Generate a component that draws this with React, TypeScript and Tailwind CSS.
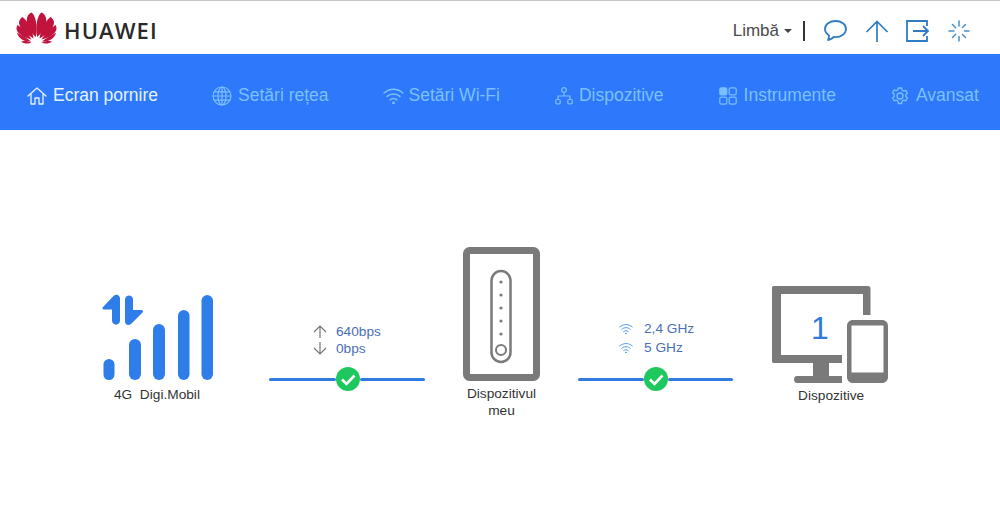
import React from "react";

const font = "font-['Liberation_Sans',Arial,sans-serif]";

const Petals = () => (
  <>
    <path d="M19.8 25C14 20 9.500 13 11 6C11.500 3.500 13.500 1 15.500 .5C19.500 3 22 14 19.800 25Z" />
    <path d="M17.500 26.500C10 22 3 16 3 10.500C3 8.500 4.500 6 6.500 5C11 8 16.500 18 17.500 26.500Z" />
    <path d="M15.500 27.500C9 26 1.500 22.500 .5 17C.5 15.500 .8 14 1.500 13C6 16 12 21 15.500 27.500Z" />
    <path d="M15 29.500C9.500 30 3 27.500 .8 20.500C5.500 23.500 11 26 15 29.500Z" />
    <path d="M15.500 30.500C12.500 32 8 32 5 29.500C8 28.500 12 29 15.500 30.500Z" />
  </>
);

const HuaweiLogo = () => (
  <svg width="41" height="32" viewBox="0 0 41 32" fill="#c0143c">
    <Petals />
    <g transform="matrix(-1 0 0 1 41 0)">
      <Petals />
    </g>
  </svg>
);

const HomeIcon = () => (
  <svg width="20" height="20" viewBox="0 0 20 20" fill="none" stroke="currentColor" strokeWidth="1.3">
    <path d="M1 10 10 2l9 8M4 8v10h4v-6h4v6h4V8" strokeLinejoin="round" strokeLinecap="round" />
  </svg>
);

const GlobeIcon = () => (
  <svg width="20" height="20" viewBox="0 0 20 20" fill="none" stroke="currentColor" strokeWidth="1.2">
    <circle cx="10" cy="10" r="9" />
    <ellipse cx="10" cy="10" rx="4" ry="9" />
    <path d="M10 1v18M1 10h18M2.200 5.800h15.600M2.200 14.200h15.600" />
  </svg>
);

const WifiIcon = ({ size = 21 }: { size?: number }) => (
  <svg width={size} height={size * 0.85} viewBox="0 0 21 18" fill="none" stroke="currentColor" strokeWidth="1.5" strokeLinecap="round">
    <path d="M1 6c5.500-5 13.500-5 19 0M4 9.500c3.800-3.400 9.200-3.400 13 0M7 13c2-1.700 5-1.700 7 0" />
    <circle cx="10.500" cy="16" r="1.400" fill="currentColor" stroke="none" />
  </svg>
);

const TreeIcon = () => (
  <svg width="18" height="18" viewBox="0 0 18 18" fill="none" stroke="currentColor" strokeWidth="1.2">
    <circle cx="9" cy="3" r="2.300" />
    <rect x=".8" y="12.500" width="4.400" height="4.400" rx="1.200" />
    <rect x="12.800" y="12.500" width="4.400" height="4.400" rx="1.200" />
    <path d="M9 5.500V9M3 12.500V9h12v3.500" />
  </svg>
);

const AppsIcon = () => (
  <svg width="18" height="18" viewBox="0 0 18 18" fill="none" stroke="currentColor" strokeWidth="1.2">
    <rect x=".8" y=".8" width="7" height="7" rx="1.600" fill="currentColor" />
    <rect x="10.200" y=".8" width="7" height="7" rx="1.600" />
    <rect x=".8" y="10.200" width="7" height="7" rx="1.600" />
    <rect x="10.200" y="10.200" width="7" height="7" rx="1.600" />
  </svg>
);

const GearIcon = () => (
  <svg width="18" height="18" viewBox="0 0 18 18" fill="none" stroke="currentColor" strokeWidth="1.3" strokeLinejoin="round">
    <path d="M7.400 1h3.200l.5 2.200 1.600.9 2.100-.7 1.600 2.800-1.600 1.500v1.800l1.600 1.500-1.600 2.800-2.100-.7-1.600.9-.5 2.500H7.400l-.5-2.500-1.600-.9-2.100.7-1.600-2.800 1.600-1.500V7.200L1.600 5.700l1.600-2.800 2.100.7 1.600-.9z" />
    <circle cx="9" cy="9" r="3" />
  </svg>
);

const navItems = [
  { name: "Ecran pornire", icon: <HomeIcon />, cls: "gap-[6px] text-[#e6f4ff]" },
  { name: "Setări rețea", icon: <GlobeIcon />, cls: "ml-[54px] gap-[6px] text-[#7cc0fb]" },
  { name: "Setări Wi-Fi", icon: <WifiIcon />, cls: "ml-[54px] gap-[5px] text-[#7cc0fb]" },
  { name: "Dispozitive", icon: <TreeIcon />, cls: "ml-[55px] gap-[6px] text-[#7cc0fb]" },
  { name: "Instrumente", icon: <AppsIcon />, cls: "ml-[55px] gap-[7px] text-[#7cc0fb]" },
  { name: "Avansat", icon: <GearIcon />, cls: "ml-[55px] gap-[7px] text-[#7cc0fb]" },
];

const Header = () => (
  <header className="flex h-[54px] items-center justify-between border-t border-[#c6c6c6] bg-white pl-4 pr-[30px]">
    <div className="flex items-center gap-[7px]">
      <HuaweiLogo />
      <span className="pt-[6px] font-['Open_Sans',sans-serif] text-[22px] font-semibold tracking-[1.1px] text-[#2a2a2a]">HUAWEI</span>
    </div>
    <div className="flex items-center pt-[6px] text-[#2f7cc4]">
      <span className="text-[17px] text-[#4a4a4a]">Limbă</span>
      <span className="ml-[5px] h-0 w-0 border-x-4 border-t-[4px] border-x-transparent border-t-[#444]" />
      <span className="ml-[11px] h-[20px] w-[2px] bg-[#333]" />
      <svg className="ml-[19px]" width="23" height="21" viewBox="0 0 23 21" fill="none" stroke="currentColor" strokeWidth="1.8">
        <path d="M11.500 1C5.700 1 1 4.500 1 9c0 2.600 1.500 4.800 4 6.200 0 1.800-.3 3.300-1 4.800 2.500-.6 4.400-1.700 5.800-3 .6.100 1.100.100 1.700.100 5.800 0 10.500-3.600 10.500-8.100S17.300 1 11.500 1Z" strokeLinejoin="round" />
      </svg>
      <svg className="ml-[18px]" width="24" height="22" viewBox="0 0 24 22" fill="none" stroke="currentColor" strokeWidth="1.7">
        <path d="M12 22V1.500M1.500 12 12 1.500 22.500 12" />
      </svg>
      <svg className="ml-[17px]" width="24" height="22" viewBox="0 0 24 22" fill="none" stroke="currentColor" strokeWidth="1.8">
        <path d="M21 6V1H1v20h20v-5M7 11h15M17 6l5 5-5 5" />
      </svg>
      <svg className="ml-[18px]" width="22" height="22" viewBox="0 0 22 22" fill="none" stroke="#4a90c8" strokeWidth="1.500" strokeLinecap="round">
        <path d="M11 1v5M11 16.500v4.500M1 11h5M16.500 11H21M4.500 4.500l3.200 3.200M14.500 14.500l3 3M4.500 17.500l3.200-3.200M14.500 7.500l3-3" />
      </svg>
    </div>
  </header>
);

const Nav = () => (
  <nav className="flex h-[76px] items-center bg-[#2d78fb] pl-[27px] pt-[7px] text-[17.5px]">
    {navItems.map(({ name, icon, cls }) => (
      <div key={name} className={`flex items-center whitespace-nowrap ${cls}`}>
        {icon}
        <span>{name}</span>
      </div>
    ))}
  </nav>
);

const SignalIcon = () => (
  <svg width="114" height="87" viewBox="101 294 114 87" fill="#2f7de8">
    <path d="M103 307 113.500 296C116 293.500 120 295 120 298.500V320.500C120 326 112 326 112 320.500V309.500H104C102.500 309.500 102 308 103 307Z" />
    <path d="M125 299.500C125 294 133 294 133 299.500V310H141.500C143 310 143.500 311.500 142.500 312.500L131 324C128.500 326 125 325 125 321.500Z" />
    <rect x="103.500" y="359" width="11" height="21" rx="5.500" />
    <rect x="129" y="339" width="12" height="41" rx="6" />
    <rect x="153" y="324" width="12" height="56" rx="6" />
    <rect x="178" y="310" width="11.500" height="70" rx="5.750" />
    <rect x="201.500" y="295" width="11.500" height="85" rx="5.750" />
  </svg>
);

const RouterIcon = () => (
  <svg width="77" height="134" viewBox="463 247 77 134" fill="none" stroke="#7a7a7a">
    <rect x="466.500" y="250.500" width="70" height="127" rx="3" strokeWidth="7" />
    <rect x="491.500" y="271" width="19" height="91" rx="9.500" strokeWidth="2.500" />
    <circle cx="501" cy="350" r="5" strokeWidth="2" />
    <g fill="#7a7a7a" stroke="none">
      <circle cx="501" cy="282" r="1.600" />
      <circle cx="501" cy="295" r="1.600" />
      <circle cx="501" cy="308" r="1.600" />
      <circle cx="501" cy="321" r="1.600" />
      <circle cx="501" cy="334" r="1.600" />
    </g>
  </svg>
);

const DevicesIcon = () => (
  <svg width="117" height="98" viewBox="772 286 117 98" fill="#7a7a7a">
    <path d="M775 286h93c1.500 0 2.500 1 2.500 2.500V315H863V294h-82v61h61v8h-13v13h13v7h-45c-4 0-4-7 0-7h16v-13h-39c-1.500 0-2.500-1-2.500-2.500v-72c0-1.500 1-2.500 2.500-2.500Z" />
    <path fillRule="evenodd" d="M853 320h29c3.500 0 6 2.500 6 6v51c0 3.500-2.500 6-6 6h-29c-3.500 0-6-2.500-6-6v-51c0-3.500 2.500-6 6-6Zm-1.500 5.500v47h32v-47Z" />
  </svg>
);

const LinkStatus = ({ leftClass }: { leftClass: string }) => (
  <div className="flex h-6 items-center">
    <div className={`h-[3px] rounded-full bg-[#2f7be0] ${leftClass}`} />
    <svg width="24" height="24" viewBox="0 0 24 24">
      <circle cx="12" cy="12" r="12" fill="#1fc75f" />
      <path d="M6 12.500 10.500 17 18.500 8.500" fill="none" stroke="#fff" strokeWidth="2.600" />
    </svg>
    <div className="h-[3px] flex-1 rounded-full bg-[#2f7be0]" />
  </div>
);

const Arrow = ({ down }: { down?: boolean }) => (
  <svg width="14" height="13" viewBox="0 0 14 13" fill="none" stroke="#777" strokeWidth="1.200" className={down ? "rotate-180" : ""}>
    <path d="M7 13V1M1 7l6-6 6 6" />
  </svg>
);

const Diagram = () => (
  <main className="flex items-start bg-white pl-[101px] pt-[117px] text-[13.7px] text-[#333]">
    <div className="mt-[47px] w-[114px]">
      <SignalIcon />
      <div className="mt-[5px] whitespace-pre pl-[13px] leading-[18px]">4G  Digi.Mobil</div>
    </div>

    <div className="ml-[54px] mt-[76px] w-[156px]">
      <div className="mb-[10px] pl-[44px] leading-[17px] text-[#4a6fb5]">
        <div className="flex items-center gap-[9px]"><Arrow />640bps</div>
        <div className="flex items-center gap-[9px]"><Arrow down />0bps</div>
      </div>
      <LinkStatus leftClass="w-[67px]" />
    </div>

    <div className="ml-[38px] flex w-[77px] flex-col items-center">
      <RouterIcon />
      <div className="mt-[4px] w-[80px] text-center leading-[17px]">Dispozitivul meu</div>
    </div>

    <div className="ml-[38px] mt-[72px] w-[155px]">
      <div className="mb-[10px] pl-[41px] leading-[19px] text-[#4a6fb5]">
        <div className="flex items-center gap-[11px]"><span className="text-[#4d9be8]"><WifiIcon size={14} /></span>2,4 GHz</div>
        <div className="flex items-center gap-[11px]"><span className="text-[#4d9be8]"><WifiIcon size={14} /></span>5 GHz</div>
      </div>
      <LinkStatus leftClass="w-[66px]" />
    </div>

    <div className="relative ml-[39px] mt-[39px] w-[117px]">
      <DevicesIcon />
      <span className="absolute left-[39px] top-[22px] text-[32px] leading-[40px] text-[#2f7be0]">1</span>
      <div className="mt-[3px] pl-[26px] leading-[18px]">Dispozitive</div>
    </div>
  </main>
);

export default function App() {
  return (
    <div className={`h-[525px] w-[1000px] overflow-hidden bg-white ${font}`}>
      <Header />
      <Nav />
      <Diagram />
    </div>
  );
}
